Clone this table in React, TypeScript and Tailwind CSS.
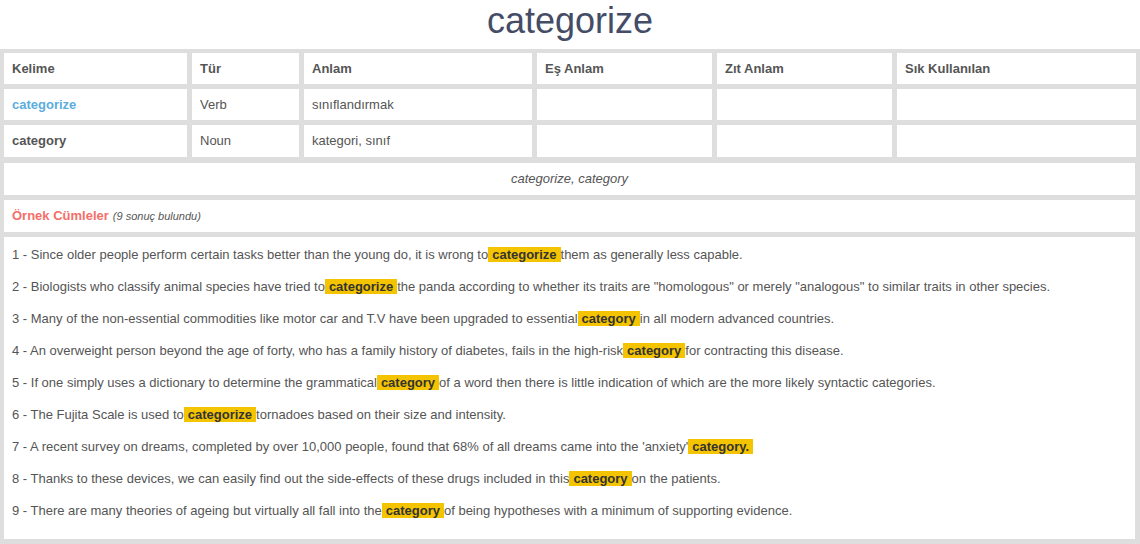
import React from "react";

const cols = "grid-cols-[183px_107px_228px_175px_175px_239px]";

function Hl({ children }: { children: React.ReactNode }) {
  return <b className="bg-[#f5c400] px-[4px] font-bold text-[#333]">{children}</b>;
}

const sentences: React.ReactNode[] = [
  <>1 - Since older people perform certain tasks better than the young do, it is wrong to<Hl>categorize</Hl>them as generally less capable.</>,
  <>2 - Biologists who classify animal species have tried to<Hl>categorize</Hl>the panda according to whether its traits are "homologous" or merely "analogous" to similar traits in other species.</>,
  <>3 - Many of the non-essential commodities like motor car and T.V have been upgraded to essential<Hl>category</Hl>in all modern advanced countries.</>,
  <>4 - An overweight person beyond the age of forty, who has a family history of diabetes, fails in the high-risk<Hl>category</Hl>for contracting this disease.</>,
  <>5 - If one simply uses a dictionary to determine the grammatical<Hl>category</Hl>of a word then there is little indication of which are the more likely syntactic categories.</>,
  <>6 - The Fujita Scale is used to<Hl>categorize</Hl>tornadoes based on their size and intensity.</>,
  <>7 - A recent survey on dreams, completed by over 10,000 people, found that 68% of all dreams came into the 'anxiety'<Hl>category.</Hl></>,
  <>8 - Thanks to these devices, we can easily find out the side-effects of these drugs included in this<Hl>category</Hl>on the patients.</>,
  <>9 - There are many theories of ageing but virtually all fall into the<Hl>category</Hl>of being hypotheses with a minimum of supporting evidence.</>,
];

export default function App() {
  const base = "bg-white flex items-center pl-[8px] text-[13px]";
  const c31 = `${base} h-[31px]`;
  const c32 = `${base} h-[32px]`;
  return (
    <div className="w-[1140px] h-[544px] bg-white font-['Liberation_Sans',Arial,sans-serif] overflow-hidden">
      <h1 className="h-[49px] flex items-center justify-center text-[36px] text-[#444c66] leading-none pb-[7px]">
        categorize
      </h1>
      <div className="bg-[#dedede] pt-[4px] pl-[4px] pr-[5px] pb-[5px] flex flex-col">
        <div className={`grid ${cols} gap-[5px]`}>
          <div className={`${c31} font-bold text-[#555]`}>Kelime</div>
          <div className={`${c31} font-bold text-[#555]`}>Tür</div>
          <div className={`${c31} font-bold text-[#555]`}>Anlam</div>
          <div className={`${c31} font-bold text-[#555]`}>Eş Anlam</div>
          <div className={`${c31} font-bold text-[#555]`}>Zıt Anlam</div>
          <div className={`${c31} font-bold text-[#555]`}>Sık Kullanılan</div>

          <div className={`${c31} font-bold text-[#5badde]`}>categorize</div>
          <div className={`${c31} text-[#555]`}>Verb</div>
          <div className={`${c31} text-[#555]`}>sınıflandırmak</div>
          <div className={c31}></div>
          <div className={c31}></div>
          <div className={c31}></div>

          <div className={`${c32} font-bold text-[#555]`}>category</div>
          <div className={`${c32} text-[#555]`}>Noun</div>
          <div className={`${c32} text-[#555]`}>kategori, sınıf</div>
          <div className={c32}></div>
          <div className={c32}></div>
          <div className={c32}></div>
        </div>
        <div className="mt-[6px] bg-white h-[32px] flex items-center justify-center text-[13px] italic text-[#555]">
          categorize, category
        </div>
        <div className="mt-[5px] bg-white h-[32px] flex items-center pl-[8px]">
          <span className="text-[13px] font-bold text-[#f46f6a]">Örnek Cümleler</span>
          <span className="ml-[4px] text-[11px] italic text-[#555]">(9 sonuç bulundu)</span>
        </div>
        <div className="mt-[5px] bg-white h-[302px] pt-[2px] pl-[8px] text-[13px] text-[#555]">
          {sentences.map((s, i) => (
            <div key={i} className="h-[32px] leading-[32px] whitespace-nowrap">{s}</div>
          ))}
        </div>
      </div>
    </div>
  );
}
